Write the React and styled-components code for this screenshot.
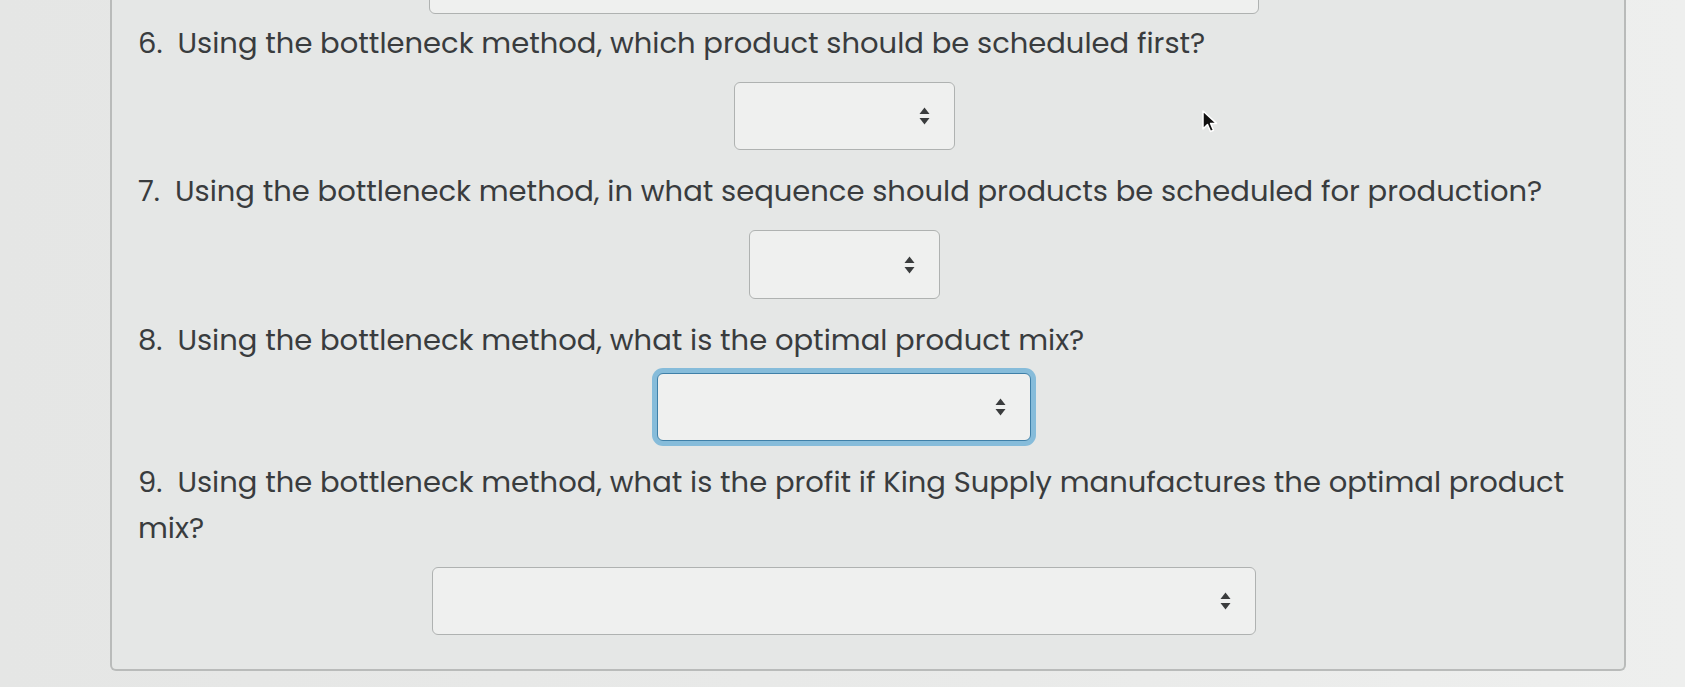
import React from 'react';
import styled, { createGlobalStyle } from 'styled-components';

const GlobalStyle = createGlobalStyle`
  html, body {
    margin: 0;
    padding: 0;
    background: #e8e9e8;
  }
  body {
    font-family: Poppins, 'Noto Sans', sans-serif;
    overflow: hidden;
  }
`;

const Page = styled.div`
  position: relative;
  width: 1685px;
  height: 687px;
  overflow: hidden;
  display: flex;
  align-items: flex-start;
  padding-left: 110px;
  box-sizing: border-box;
  background: linear-gradient(90deg, #e5e6e5 0%, #e9eae9 60%, #eeefee 100%);
`;

const Panel = styled.section`
  width: 1516px;
  box-sizing: border-box;
  background: #e5e7e6;
  border: 2px solid #b9bbba;
  border-top: none;
  border-radius: 0 0 6px 6px;
  padding: 0 40px 34px 26px;
`;

const List = styled.div`
  display: flex;
  flex-direction: column;
  gap: 18px;
  margin-top: 6px;
`;

const Item = styled.div`
  display: flex;
  flex-direction: column;
  gap: ${(p) => p.$gap || 16}px;
`;

const Question = styled.p`
  margin: 0;
  font-size: 29px;
  line-height: 46px;
  color: #393c3e;
`;

const Num = styled.span`
  display: inline-block;
  margin-right: 15px;
`;

const SelectRow = styled.div`
  display: flex;
  justify-content: center;
  padding-right: 34px;
`;

const Select = styled.div`
  width: ${(p) => p.$w}px;
  height: ${(p) => p.$h || 68}px;
  box-sizing: border-box;
  background: #eff0ef;
  border: ${(p) => (p.$focused ? '1.5px solid #3f80a8' : '1.5px solid #afb2b1')};
  border-radius: 6px;
  box-shadow: ${(p) => (p.$focused ? '0 0 0 5px #86bcda' : 'none')};
  display: flex;
  align-items: center;
  justify-content: flex-end;
  padding-right: 24px;
`;

const PrevSelect = styled(Select)`
  margin-top: -54px;
`;

const Arrows = () => (
  <svg width="11" height="18" viewBox="0 0 11 18">
    <path d="M5.5 0.5 L10.5 7 L0.5 7 Z" fill="#3a3c3d" />
    <path d="M5.5 17.5 L10.5 11 L0.5 11 Z" fill="#3a3c3d" />
  </svg>
);

const Cursor = styled.svg`
  position: absolute;
  left: 1202px;
  top: 110px;
`;

const questions = [
  { n: '6.', text: 'Using the bottleneck method, which product should be scheduled first?', w: 221, h: 68 },
  { n: '7.', text: 'Using the bottleneck method, in what sequence should products be scheduled for production?', w: 191, h: 69 },
  { n: '8.', text: 'Using the bottleneck method, what is the optimal product mix?', w: 374, h: 68, focused: true, gap: 10 },
  { n: '9.', text: 'Using the bottleneck method, what is the profit if King Supply manufactures the optimal product mix?', w: 824, h: 68 },
];

export default function App() {
  return (
    <>
      <GlobalStyle />
      <Page>
        <Panel>
          <SelectRow>
            <PrevSelect $w={830} $h={68} />
          </SelectRow>
          <List>
            {questions.map((q) => (
              <Item key={q.n} $gap={q.gap}>
                <Question>
                  <Num>{q.n}</Num>
                  {q.text}
                </Question>
                <SelectRow>
                  <Select $w={q.w} $h={q.h} $focused={q.focused}>
                    <Arrows />
                  </Select>
                </SelectRow>
              </Item>
            ))}
          </List>
        </Panel>
        <Cursor width="16" height="24" viewBox="0 0 16 24">
          <path d="M1 1 L1 19 L5.5 14.5 L8.5 21.5 L11.5 20.2 L8.6 13.4 L14.5 13.4 Z" fill="#111" stroke="#fff" strokeWidth="1.5" strokeLinejoin="round" />
        </Cursor>
      </Page>
    </>
  );
}
